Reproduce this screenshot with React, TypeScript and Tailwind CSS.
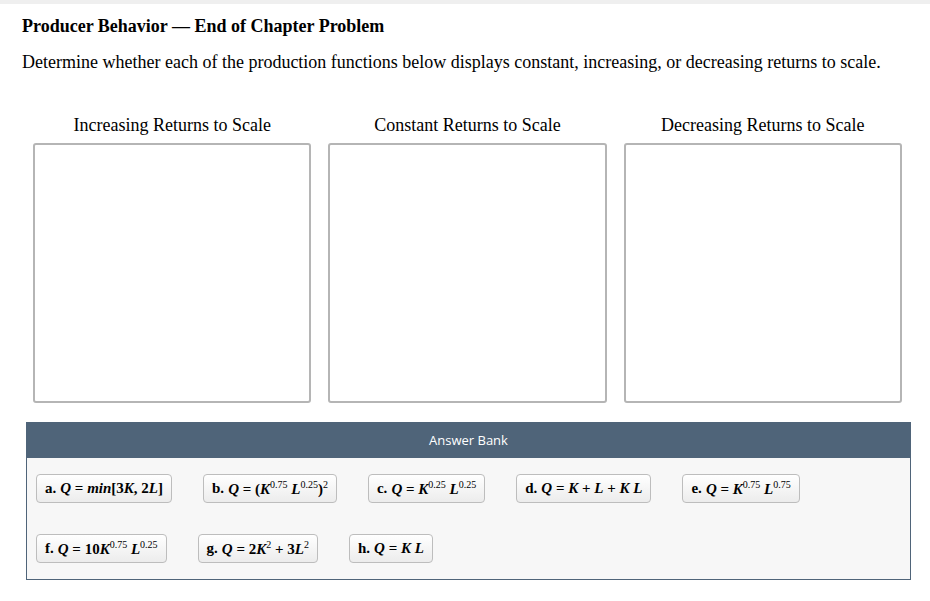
import React from 'react';

const serif = "font-['Liberation_Serif','Times_New_Roman',serif]";

const Sup = ({ children }: { children: React.ReactNode }) => (
  <span className="text-[10px] font-normal align-[6px] leading-none">{children}</span>
);

const I = ({ children }: { children: React.ReactNode }) => <i className="italic">{children}</i>;

type Chip = { label: string; math: React.ReactNode };

const chips: Chip[] = [
  { label: 'a.', math: <><I>Q</I> = <I>min</I>[3<I>K</I>, 2<I>L</I>]</> },
  { label: 'b.', math: <><I>Q</I> = (<I>K</I><Sup>0.75</Sup> <I>L</I><Sup>0.25</Sup>)<Sup>2</Sup></> },
  { label: 'c.', math: <><I>Q</I> = <I>K</I><Sup>0.25</Sup> <I>L</I><Sup>0.25</Sup></> },
  { label: 'd.', math: <><I>Q</I> = <I>K</I> + <I>L</I> + <I>K L</I></> },
  { label: 'e.', math: <><I>Q</I> = <I>K</I><Sup>0.75</Sup> <I>L</I><Sup>0.75</Sup></> },
  { label: 'f.', math: <><I>Q</I> = 10<I>K</I><Sup>0.75</Sup> <I>L</I><Sup>0.25</Sup></> },
  { label: 'g.', math: <><I>Q</I> = 2<I>K</I><Sup>2</Sup> + 3<I>L</I><Sup>2</Sup></> },
  { label: 'h.', math: <><I>Q</I> = <I>K L</I></> },
];

const columns = ['Increasing Returns to Scale', 'Constant Returns to Scale', 'Decreasing Returns to Scale'];

export default function App() {
  return (
    <div className={`min-h-screen bg-white text-black border-t-4 border-[#efefef] ${serif}`}>
      <div className="px-[22px] pt-[11px]">
        <h1 className="text-[18px] font-bold leading-[22px]">Producer Behavior — End of Chapter Problem</h1>
        <p className="text-[18px] leading-[22px] mt-[14px]">
          Determine whether each of the production functions below displays constant, increasing, or decreasing returns to scale.
        </p>
      </div>

      {/* Drop targets */}
      <div className="pt-[42px] pl-[33px] pr-[28px] grid grid-cols-3 gap-x-[17px]">
        {columns.map((c) => (
          <div key={c} className="flex flex-col">
            <div className="text-[18px] leading-[20px] text-center">{c}</div>
            <div className="mt-[8px] h-[260px] border-2 border-[#b5b5b5] rounded-[3px] bg-white" />
          </div>
        ))}
      </div>

      {/* Answer bank */}
      <div className="pt-[19px] pl-[26px] pr-[19px]">
        <div className="border border-[#4f6479]">
          <div className="h-[35px] bg-[#4f6479] flex items-center justify-center text-white text-[13px] font-['Open_Sans',sans-serif]">
            Answer Bank
          </div>
          <div className="bg-[#f7f7f7] px-[9px] pt-[16px] pb-[16px] flex flex-wrap gap-x-[31px] gap-y-[31px]">
            {chips.map((ch) => (
              <div
                key={ch.label}
                className="h-[29px] px-[8px] flex items-center border border-[#bdbdbd] rounded-[4px] bg-gradient-to-b from-white to-[#ececec] text-[15px] font-bold whitespace-nowrap leading-none"
              >
                <span className="mr-[4px]">{ch.label}</span>
                <span>{ch.math}</span>
              </div>
            ))}
          </div>
        </div>
      </div>
    </div>
  );
}
